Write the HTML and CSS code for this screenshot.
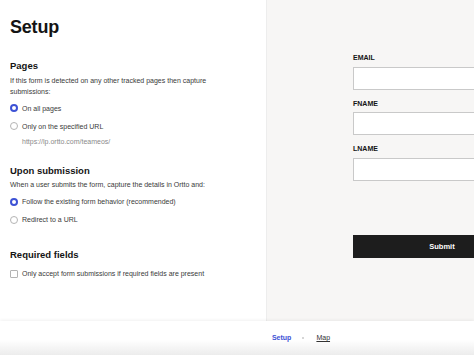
FILE: index.html
```html
<!DOCTYPE html>
<html>
<head>
    <title>Form Setup</title>
    <link rel="stylesheet" href="styles.css">
</head>
<body>
    <div class="layout">
        <div class="setup-panel">
            <h1>Setup</h1>

            <div class="section">
                <h2>Pages</h2>
                <p class="hint">If this form is detected on any other tracked pages then capture submissions:</p>
                <label class="option"><span class="radio checked"></span>On all pages</label>
                <label class="option"><span class="radio"></span>Only on the specified URL</label>
                <p class="url">https://lp.ortto.com/teameos/</p>
            </div>

            <div class="section">
                <h2>Upon submission</h2>
                <p class="hint">When a user submits the form, capture the details in Ortto and:</p>
                <label class="option"><span class="radio checked"></span>Follow the existing form behavior (recommended)</label>
                <label class="option"><span class="radio"></span>Redirect to a URL</label>
            </div>

            <div class="section section-last">
                <h2>Required fields</h2>
                <label class="option option-check"><span class="checkbox"></span>Only accept form submissions if required fields are present</label>
            </div>
        </div>

        <div class="preview-panel">
            <div class="preview-form">
                <div class="field">
                    <label>EMAIL</label>
                    <div class="input"></div>
                </div>
                <div class="field">
                    <label>FNAME</label>
                    <div class="input"></div>
                </div>
                <div class="field">
                    <label>LNAME</label>
                    <div class="input"></div>
                </div>
                <div class="submit-btn">Submit</div>
            </div>
        </div>
    </div>

    <div class="footer">
        <div class="steps">
            <a class="step active">Setup</a>
            <span class="dot"></span>
            <a class="step">Map</a>
        </div>
    </div>
</body>
</html>
```

FILE: styles.css
```css
:root {
    --accent-blue: #3d52d5;
    --text-dark: #141414;
    --text-body: #3a3a3a;
    --text-muted: #8a8a8a;
    --preview-bg: #f7f6f5;
    --border-grey: #c9c9c9;
}

* {
    margin: 0;
    padding: 0;
    box-sizing: border-box;
    font-family: 'Liberation Sans', Arial, sans-serif;
}

body {
    width: 474px;
    height: 355px;
    overflow: hidden;
    background: white;
    display: flex;
    flex-direction: column;
}

.layout {
    display: flex;
    height: 321px;
}

.setup-panel {
    width: 267px;
    padding: 16px 10px 0 10px;
    background: white;
    border-right: 1px solid #ededed;
}

.setup-panel h1 {
    font-size: 18px;
    line-height: 22px;
    font-weight: bold;
    color: var(--text-dark);
    letter-spacing: -0.2px;
}

.section {
    margin-top: 22px;
}

.section + .section {
    margin-top: 18px;
}

.section-last {
    margin-top: 23px !important;
}

.section h2 {
    font-size: 9.5px;
    line-height: 12px;
    font-weight: bold;
    color: var(--text-dark);
}

.hint {
    max-width: 218px;
    margin-top: 2.5px;
    font-size: 7px;
    line-height: 11px;
    color: var(--text-body);
}

.option {
    display: flex;
    align-items: center;
    height: 12px;
    margin-top: 6px;
    font-size: 7px;
    color: var(--text-body);
}

.hint + .option {
    margin-top: 5.5px;
}

.option-check {
    margin-top: 7px;
}

.radio {
    width: 8px;
    height: 8px;
    margin-right: 4px;
    border-radius: 50%;
    border: 1px solid #b4b4b4;
    background: white;
}

.radio.checked {
    border: 2.5px solid var(--accent-blue);
}

.checkbox {
    width: 8px;
    height: 8px;
    margin-right: 4px;
    border: 1px solid #b4b4b4;
    border-radius: 1px;
    background: white;
}

.url {
    margin-top: 3.5px;
    padding-left: 12px;
    font-size: 7px;
    line-height: 11px;
    color: var(--text-muted);
}

.preview-panel {
    flex: 1;
    background: var(--preview-bg);
    overflow: hidden;
    padding: 53px 0 0 86px;
}

.preview-form {
    width: 178px;
}

.field {
    margin-bottom: 9px;
}

.field label {
    display: block;
    font-size: 7px;
    line-height: 9px;
    font-weight: bold;
    color: var(--text-dark);
    margin-bottom: 4.5px;
}

.field .input {
    height: 23px;
    background: white;
    border: 1px solid var(--border-grey);
}

.submit-btn {
    margin-top: 54px;
    height: 23px;
    background: #1d1d1d;
    color: white;
    font-size: 7.5px;
    font-weight: bold;
    display: flex;
    align-items: center;
    justify-content: center;
}

.footer {
    flex: 1;
    background: linear-gradient(to bottom, #ffffff 0%, #ffffff 55%, #ececec 100%);
    box-shadow: 0 -1px 3px rgba(0, 0, 0, 0.06);
    position: relative;
    display: flex;
    justify-content: center;
    align-items: center;
    padding-left: 128px;
}

.steps {
    display: flex;
    align-items: center;
    margin-bottom: 1px;
}

.step {
    font-size: 7px;
    color: #333;
    text-decoration: underline;
}

.step.active {
    color: var(--accent-blue);
    font-weight: bold;
    text-decoration: none;
}

.dot {
    width: 2px;
    height: 2px;
    border-radius: 50%;
    background: #c8c8c8;
    margin: 0 12px 0 11px;
}
```
